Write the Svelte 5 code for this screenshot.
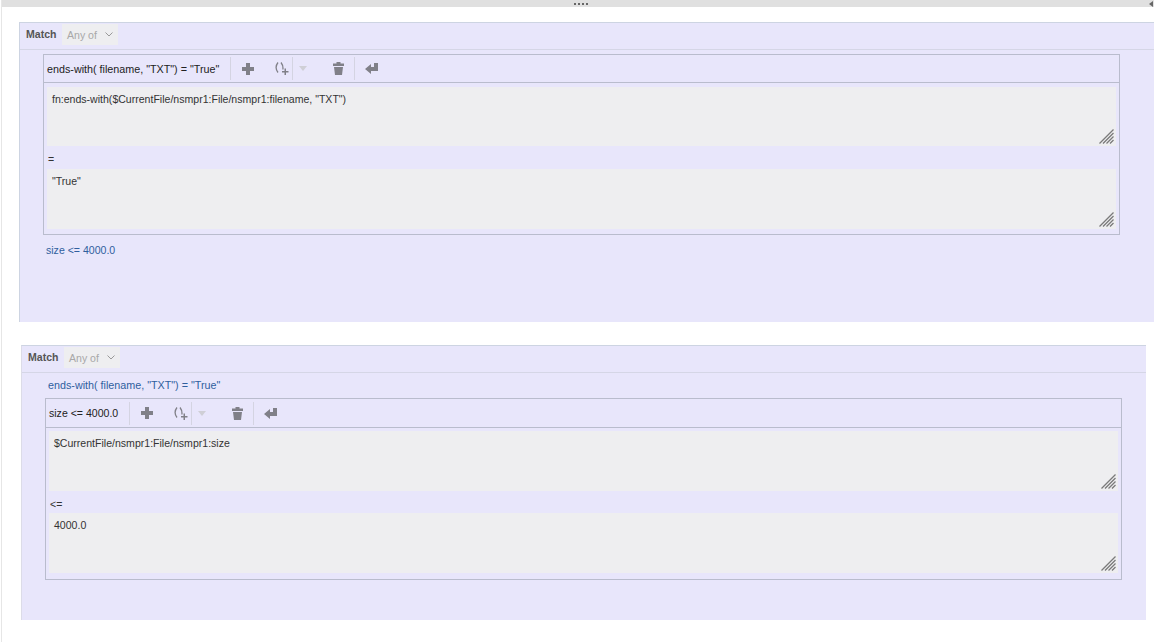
<script>
  const panels = [
    {
      collapsedAbove: null,
      title: 'ends-with( filename, "TXT") = "True"',
      left: 'fn:ends-with($CurrentFile/nsmpr1:File/nsmpr1:filename, "TXT")',
      op: '=',
      right: '"True"',
      collapsedBelow: 'size <= 4000.0',
      cls: 'first'
    },
    {
      collapsedAbove: 'ends-with( filename, "TXT") = "True"',
      title: 'size <= 4000.0',
      left: '$CurrentFile/nsmpr1:File/nsmpr1:size',
      op: '<=',
      right: '4000.0',
      collapsedBelow: null,
      cls: 'second'
    }
  ];
</script>

{#snippet grip()}
  <svg class="grip" width="15" height="15" viewBox="0 0 15 15">
    <path d="M14.500 .5 L.5 14.500 M14.500 4 L4 14.500 M14.500 7.500 L7.500 14.500 M14.500 11 L11 14.500" stroke="#7a7a7a" stroke-width="1.300" fill="none" />
  </svg>
{/snippet}

<div class="page">
  <div class="topbar">
    <div class="dots"><i></i><i></i><i></i><i></i></div>
    <svg class="arrow" width="4" height="6" viewBox="0 0 4 6"><path d="M4 0 V6 L0 3 Z" fill="#666" /></svg>
  </div>

  {#each panels as p}
    <section class="panel {p.cls}">
      <header class="match">
        <b>Match</b>
        <div class="select">
          <span>Any of</span>
          <svg width="8" height="5" viewBox="0 0 8 5"><path d="M.5.5 4 4 7.500.5" fill="none" stroke="#999" /></svg>
        </div>
      </header>

      {#if p.collapsedAbove}
        <div class="collapsed above">{p.collapsedAbove}</div>
      {/if}

      <div class="editor">
        <div class="toolbar">
          <span class="title">{p.title}</span>
          <div class="tools">
            <svg class="plus" width="12" height="12" viewBox="0 0 12 12"><path d="M4 0h4v4h4v4H8v4H4V8H0V4h4z" fill="#808088" /></svg>
            <svg class="paren" width="14" height="13" viewBox="0 0 14 13">
              <path d="M3 .5C.7 3.500.7 7.500 3 10.500M6 .5C7.800 2.800 8.200 5 7.900 7.500" fill="none" stroke="#808088" stroke-width="1.300" />
              <path d="M9.500 6.500h1.500V9h2.500v1.500H11V13H9.500v-2.500H7V9h2.500z" fill="#808088" />
            </svg>
            <span class="sep"></span>
            <svg class="caret" width="8" height="5" viewBox="0 0 8 5"><path d="M0 0h8L4 5z" fill="#cfcfd6" /></svg>
            <svg class="trash" width="11" height="13" viewBox="0 0 11 13"><path d="M3.500 0h4v1.500H11V4H0V1.500h3.500zM1 5h9L9 13H2z" fill="#808088" /></svg>
            <span class="sep wide"></span>
            <svg class="enter" width="13" height="11" viewBox="0 0 13 11"><path d="M9 0h4v8H6v3L0 6l6-5v3h3z" fill="#808088" /></svg>
          </div>
        </div>
        <div class="body">
          <div class="area">{p.left}{@render grip()}</div>
          <div class="op">{p.op}</div>
          <div class="area">{p.right}{@render grip()}</div>
        </div>
      </div>

      {#if p.collapsedBelow}
        <div class="collapsed below">{p.collapsedBelow}</div>
      {/if}
    </section>
  {/each}
</div>

<style>
  :global(body) {
    margin: 0;
    background: #fff;
  }

  .page {
    height: 642px;
    overflow: hidden;
    box-sizing: border-box;
    margin-left: 1px;
    border-left: 1px solid #e6e6e6;
    font-family: "Liberation Sans", Arial, sans-serif;
    font-size: 10.55px;
    color: #333;
  }

  .topbar {
    height: 7px;
    margin-left: -2px;
    background: #e0e0e0;
    display: flex;
    align-items: center;
    justify-content: center;
    position: relative;
  }
  .dots {
    display: flex;
    gap: 2px;
    margin: 1px 0 0 8px;
  }
  .dots i {
    width: 2px;
    height: 2px;
    background: #666;
  }
  .arrow {
    position: absolute;
    right: 1px;
    top: 1px;
  }

  .panel {
    background: #e8e6fb;
    box-sizing: border-box;
    border-top: 1px solid #cdd4e2;
  }
  .panel.first {
    margin: 15px 0 0 17px;
    height: 300px;
    border-left: 1px solid #cdd4e2;
  }
  .panel.second {
    margin: 23px 8px 0 19px;
    height: 275px;
    border-left: 1px solid #dcdce8;
  }

  .match {
    display: flex;
    align-items: flex-start;
    height: 27px;
    padding: 1px 0 0 6px;
    box-sizing: border-box;
    border-bottom: 1px solid #d5d6e6;
    gap: 6px;
  }
  .match b {
    width: 30px;
    line-height: 21px;
    color: #555;
  }
  .select {
    width: 56px;
    height: 21px;
    background: #eeeef0;
    display: flex;
    align-items: center;
    justify-content: space-between;
    padding: 0 3px 0 5px;
    box-sizing: border-box;
    color: #a8a8a8;
  }
  .select svg {
    margin-right: 2px;
  }

  .collapsed {
    color: #2f5f9e;
    line-height: 14px;
  }
  .collapsed.above {
    margin: 5px 0 0 26px;
    font-size: 10.75px;
  }
  .collapsed.below {
    margin: 8px 0 0 26px;
  }

  .editor {
    border: 1px solid #b9bccd;
  }
  .first .editor {
    margin: 4px 34px 0 23px;
  }
  .second .editor {
    margin: 6px 24px 0 23px;
  }

  .toolbar {
    display: flex;
    align-items: center;
    height: 27px;
    border-bottom: 1px solid #b9bccd;
    padding-left: 3px;
  }
  .second .toolbar {
    height: 28px;
  }
  .title {
    color: #222;
    white-space: nowrap;
  }
  .first .title {
    font-size: 10.75px;
  }
  .tools {
    display: flex;
    align-items: center;
    height: 23px;
    margin-left: 11px;
    border-left: 1px solid #d4d4e2;
    padding-left: 11px;
    flex: 1;
  }
  .paren {
    margin-left: 21px;
  }
  .sep {
    align-self: stretch;
    width: 1px;
    margin-left: 3px;
    background: #d4d4e2;
  }
  .sep.wide {
    margin-left: 10px;
  }
  .caret {
    margin-left: 6px;
  }
  .trash {
    margin-left: 26px;
  }
  .enter {
    margin-left: 10px;
  }

  .body {
    padding: 3px 3px 6px 3px;
  }
  .first .body {
    padding-top: 4px;
    padding-bottom: 5px;
  }
  .area {
    position: relative;
    height: 60px;
    padding: 6px 5px 0 5px;
    box-sizing: border-box;
    background: #eeeef0;
    line-height: 13px;
    color: #333;
    white-space: pre;
  }
  .first .area:first-child {
    height: 59px;
  }
  .op {
    height: 23px;
    padding: 7px 0 0 1px;
    box-sizing: border-box;
    line-height: 13px;
    color: #333;
  }
  .second .op {
    height: 22px;
  }
  .grip {
    position: absolute;
    right: 2px;
    bottom: 2px;
  }
</style>
